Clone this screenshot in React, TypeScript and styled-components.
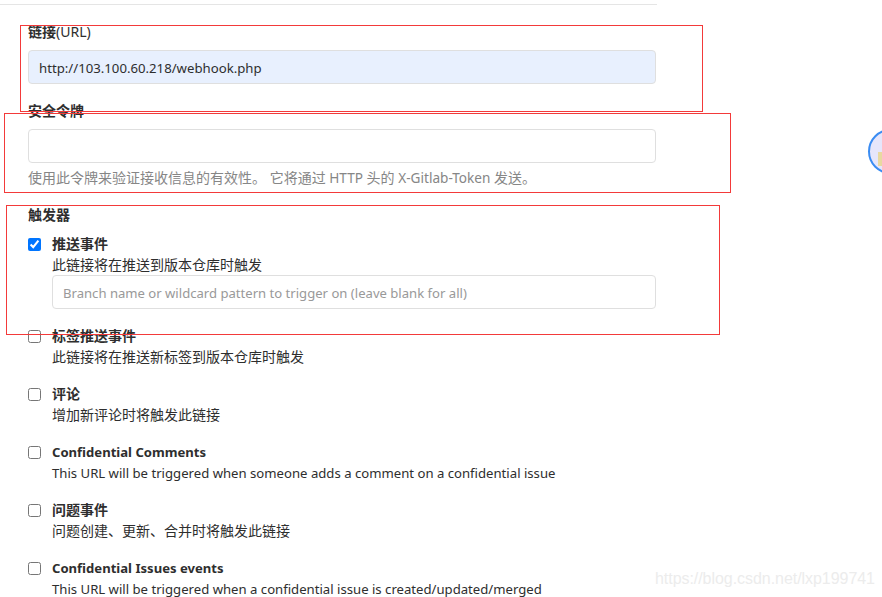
import React from "react";
import styled, { createGlobalStyle } from "styled-components";

const Global = createGlobalStyle`
  html, body { margin: 0; padding: 0; background: #fff; }
  body { font-family: "Noto Sans", "Noto Sans CJK SC", sans-serif; font-size: 14px; color: #2e2e2e; }
`;

const Page = styled.div`
  position: relative;
  width: 882px;
  height: 597px;
  overflow: hidden;
  background: #fff;
`;
const Rule = styled.div`
  width: 657px;
  height: 1px;
  margin-top: 4px;
  background: #e5e5e5;
`;
const Form = styled.form`
  display: flex;
  flex-direction: column;
  width: 628px;
  margin-left: 28px;
  padding-top: 16px;
`;
const Field = styled.div`
  margin-bottom: 16px;
`;
const Label = styled.label`
  display: block;
  line-height: 21px;
  margin-bottom: 8px;
`;
const StrongLabel = styled(Label)`
  font-weight: 600;
`;
const Strong = styled.span`
  font-weight: 600;
`;
const Latin = styled.span`
  font-size: 13.6px;
  line-height: 0;
`;
const TextInput = styled.input<{ $filled?: boolean }>`
  display: block;
  box-sizing: border-box;
  width: 100%;
  height: 34px;
  padding: 2px 10px 0;
  border: 1px solid #dfdfdf;
  border-radius: 4px;
  background: ${(p) => (p.$filled ? "#e8f0fe" : "#fff")};
  font-family: inherit;
  font-size: ${(p) => (p.$filled ? "13.2px" : "13.1px")};
  color: #2e2e2e;
  outline: none;
  &::placeholder { color: #999; opacity: 1; }
`;
const Help = styled.p`
  margin: 4px 0 0;
  line-height: 21px;
  color: #868686;
`;
const Row = styled.div`
  display: grid;
  grid-template-columns: 13px 1fr;
  column-gap: 11px;
  margin-bottom: 16px;
`;
const Check = styled.input`
  width: 13px;
  height: 13px;
  margin: 5px 0 0;
`;
const RowTitle = styled.div<{ $latin?: boolean }>`
  height: 21px;
  font-weight: ${(p) => (p.$latin ? 700 : 600)};
  font-size: ${(p) => (p.$latin ? "13.1px" : "14px")};
  line-height: ${(p) => (p.$latin ? "23px" : "21px")};
`;
const RowDesc = styled.div<{ $latin?: boolean }>`
  height: 21px;
  font-size: ${(p) => (p.$latin ? "13.15px" : "14px")};
  line-height: ${(p) => (p.$latin ? "23px" : "21px")};
`;
const Note = styled.div<{ $l: number; $t: number; $w: number; $h: number }>`
  position: absolute;
  left: ${(p) => p.$l}px;
  top: ${(p) => p.$t}px;
  width: ${(p) => p.$w}px;
  height: ${(p) => p.$h}px;
  box-sizing: border-box;
  border: 1px solid #f33a3a;
  pointer-events: none;
`;
const Avatar = styled.div`
  position: absolute;
  left: 868px;
  top: 129px;
  width: 45px;
  height: 45px;
  box-sizing: border-box;
  border: 2px solid #3a8cf2;
  border-radius: 50%;
  background: #e6e6fb;
  overflow: hidden;
`;
const AvatarMark = styled.div`
  position: absolute;
  left: 8px;
  top: 21px;
  width: 5px;
  height: 14px;
  background: #e8d9a0;
`;
const Watermark = styled.div`
  position: absolute;
  left: 655px;
  top: 569px;
  font-family: "Liberation Sans", Arial, sans-serif;
  font-size: 16px;
  line-height: 20px;
  letter-spacing: -0.05px;
  color: #ececec;
  white-space: nowrap;
`;

const triggers = [
  { title: "标签推送事件", desc: "此链接将在推送新标签到版本仓库时触发" },
  { title: "评论", desc: "增加新评论时将触发此链接" },
  { title: "Confidential Comments", desc: "This URL will be triggered when someone adds a comment on a confidential issue", latin: true },
  { title: "问题事件", desc: "问题创建、更新、合并时将触发此链接" },
  { title: "Confidential Issues events", desc: "This URL will be triggered when a confidential issue is created/updated/merged", latin: true },
];

export default function App() {
  return (
    <Page>
      <Global />
      <Rule />
      <Form onSubmit={(e) => e.preventDefault()}>
        <Field>
          <Label><Strong>链接</Strong>(URL)</Label>
          <TextInput $filled readOnly value="http://103.100.60.218/webhook.php" />
        </Field>
        <Field>
          <StrongLabel>安全令牌</StrongLabel>
          <TextInput readOnly />
          <Help>使用此令牌来验证接收信息的有效性。 它将通过 <Latin>HTTP</Latin> 头的 <Latin>X-Gitlab-Token</Latin> 发送。</Help>
        </Field>
        <StrongLabel>触发器</StrongLabel>
        <Row>
          <Check type="checkbox" defaultChecked />
          <div>
            <RowTitle>推送事件</RowTitle>
            <RowDesc>此链接将在推送到版本仓库时触发</RowDesc>
            <TextInput placeholder="Branch name or wildcard pattern to trigger on (leave blank for all)" />
          </div>
        </Row>
        {triggers.map((t) => (
          <Row key={t.title}>
            <Check type="checkbox" />
            <div>
              <RowTitle $latin={t.latin}>{t.title}</RowTitle>
              <RowDesc $latin={t.latin}>{t.desc}</RowDesc>
            </div>
          </Row>
        ))}
      </Form>
      <Note $l={20} $t={25} $w={683} $h={87} />
      <Note $l={4} $t={113} $w={727} $h={80} />
      <Note $l={6} $t={205} $w={714} $h={130} />
      <Avatar><AvatarMark /></Avatar>
      <Watermark>https://blog.csdn.net/lxp199741</Watermark>
    </Page>
  );
}
